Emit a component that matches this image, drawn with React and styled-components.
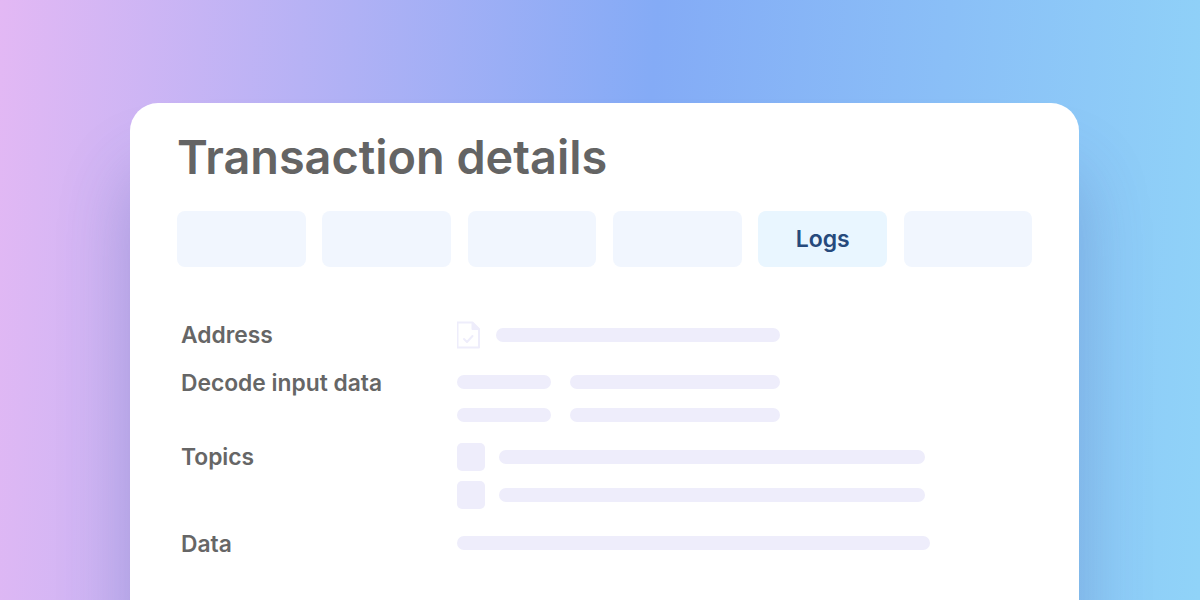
import React from "react";
import styled, { createGlobalStyle } from "styled-components";

const GlobalStyle = createGlobalStyle`
  html, body {
    margin: 0;
    padding: 0;
  }
  body {
    width: 1200px;
    height: 600px;
    overflow: hidden;
    font-family: "Inter", "Liberation Sans", sans-serif;
  }
`;

const Page = styled.div`
  width: 1200px;
  height: 600px;
  overflow: hidden;
  box-sizing: border-box;
  padding: 103px 121px 0 130px;
  background: linear-gradient(94deg, #e3b8f4 0%, #84abf6 53%, #90d3f8 100%);
`;

const Card = styled.div`
  height: 560px;
  box-sizing: border-box;
  padding: 25px 47px 0;
  background: #fff;
  border-radius: 28px;
  box-shadow: 0 70px 70px rgba(60, 80, 150, 0.28);
`;

const Title = styled.h1`
  margin: 0;
  height: 58px;
  font-family: "Inter", sans-serif;
  font-size: 46.8px;
  line-height: 58px;
  font-weight: 600;
  color: #646464;
`;

const Tabs = styled.div`
  display: grid;
  grid-template-columns: repeat(6, 1fr);
  column-gap: 16.5px;
  margin-top: 25px;
  width: 855.5px;
`;

const Tab = styled.div`
  height: 56px;
  border-radius: 8px;
  background: ${(p) => (p.$active ? "#e9f6ff" : "#f1f6fe")};
  display: flex;
  align-items: center;
  justify-content: center;
  font-size: 23px;
  font-weight: 600;
  color: #264a7c;
`;

const Rows = styled.div`
  display: flex;
  flex-direction: column;
  margin-top: 51px;
  padding-left: 4px;
`;

const Row = styled.div`
  display: grid;
  grid-template-columns: 276px 1fr;
  margin-bottom: ${(p) => p.$gap}px;
`;

const Label = styled.div`
  font-size: 22.8px;
  font-weight: 600;
  line-height: 34px;
  color: #666;
`;

const Value = styled.div`
  display: flex;
  flex-direction: column;
  padding-top: ${(p) => p.$top || 0}px;
  gap: ${(p) => p.$gap || 0}px;
`;

const Line = styled.div`
  display: flex;
  align-items: center;
  gap: ${(p) => p.$gap || 0}px;
`;

const Bar = styled.div`
  width: ${(p) => p.$w}px;
  height: 14px;
  border-radius: 7px;
  background: #eeedfb;
`;

const Square = styled.div`
  width: 28px;
  height: 28px;
  border-radius: 5px;
  background: #eeedfb;
`;

const DocIcon = () => (
  <svg width="24" height="28" viewBox="0 0 24 28" fill="none" stroke="#eeedfb" strokeWidth="2">
    <path d="M0.5 1.5H15.5L22 8V26.5H0.5Z" strokeLinejoin="round" />
    <path d="M15.5 1.5V8H22" fill="#eeedfb" strokeLinejoin="round" />
    <path d="M7 18L10 21L15.5 15" strokeLinecap="round" strokeLinejoin="round" />
  </svg>
);

export default function App() {
  return (
    <>
      <GlobalStyle />
      <Page>
        <Card>
          <Title>Transaction details</Title>
          <Tabs>
            <Tab />
            <Tab />
            <Tab />
            <Tab />
            <Tab $active>Logs</Tab>
            <Tab />
          </Tabs>
          <Rows>
            <Row $gap={14}>
              <Label>Address</Label>
              <Value $top={3}>
                <Line $gap={15}>
                  <DocIcon />
                  <Bar $w={284} />
                </Line>
              </Value>
            </Row>
            <Row $gap={18}>
              <Label>Decode input data</Label>
              <Value $top={9} $gap={19}>
                <Line $gap={19}>
                  <Bar $w={94} />
                  <Bar $w={210} />
                </Line>
                <Line $gap={19}>
                  <Bar $w={94} />
                  <Bar $w={210} />
                </Line>
              </Value>
            </Row>
            <Row $gap={18}>
              <Label>Topics</Label>
              <Value $top={3} $gap={10}>
                <Line $gap={14}>
                  <Square />
                  <Bar $w={426} />
                </Line>
                <Line $gap={14}>
                  <Square />
                  <Bar $w={426} />
                </Line>
              </Value>
            </Row>
            <Row $gap={0}>
              <Label>Data</Label>
              <Value $top={9}>
                <Line>
                  <Bar $w={473} />
                </Line>
              </Value>
            </Row>
          </Rows>
        </Card>
      </Page>
    </>
  );
}
